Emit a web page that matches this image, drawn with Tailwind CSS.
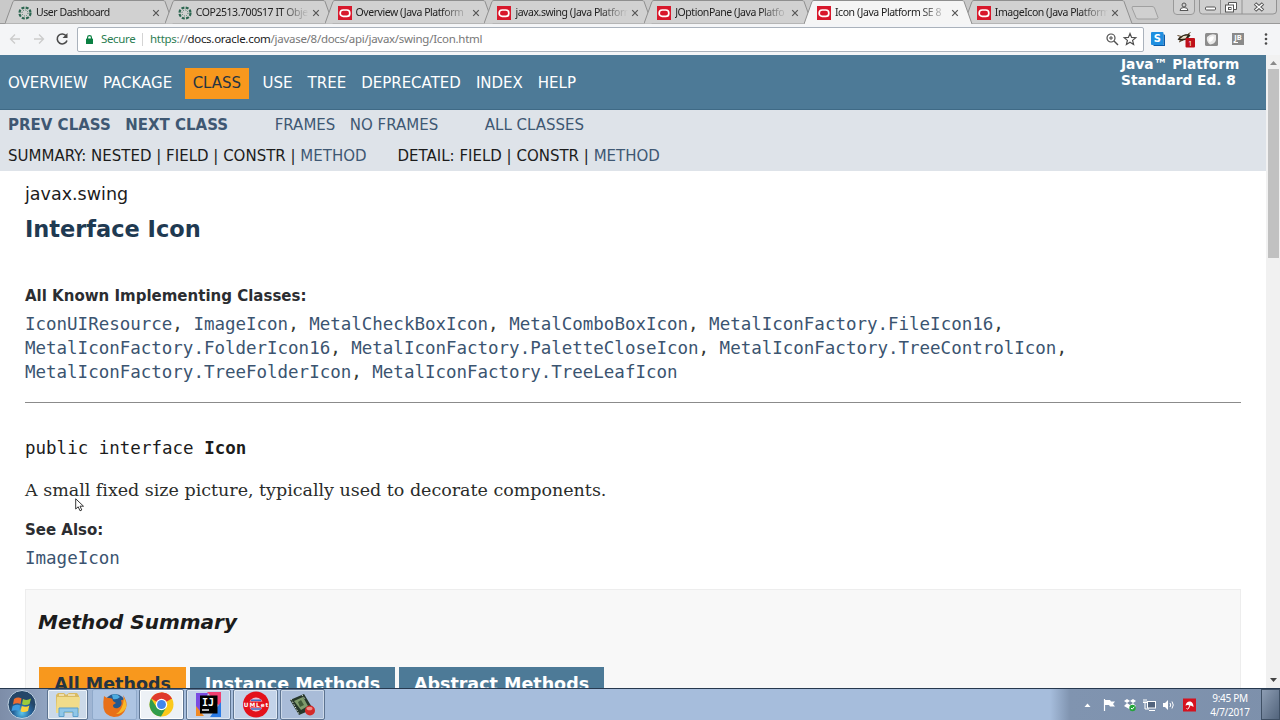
<!DOCTYPE html>
<html lang="en">
<head>
  <meta charset="UTF-8" />
  <meta name="viewport" content="width=device-width, initial-scale=1.0" />
  <title>Icon (Java Platform SE 8 )</title>
  <script src="https://cdn.jsdelivr.net/npm/@tailwindcss/browser@4"></script>
</head>
<body class="w-[1280px] h-[720px] overflow-hidden bg-white flex flex-col font-['DejaVu_Sans',sans-serif] text-[#1c1c1c]">
  <!-- shared icons -->
  <svg class="hidden">
    <symbol id="canvas" viewBox="0 0 14 14">
      <circle cx="7" cy="7" r="5.500" fill="none" stroke="#2c6650" stroke-width="2.200" stroke-dasharray="3 1.320" />
      <circle cx="7" cy="7" r="3" fill="none" stroke="#2c6650" stroke-width=".9" stroke-dasharray="1 1.360" />
    </symbol>
    <symbol id="oracle" viewBox="0 0 14 14">
      <rect width="14" height="14" fill="#d8182c" />
      <rect x="2.200" y="4" width="9.600" height="6.400" rx="3" fill="none" stroke="#fff" stroke-width="1.700" />
    </symbol>
    <symbol id="close" viewBox="0 0 8 8">
      <path d="M1.200 1.200l5.600 5.600M6.800 1.200L1.200 6.800" stroke="#555" stroke-width="1.200" />
    </symbol>
    <symbol id="tab" viewBox="0 0 170 24">
      <path d="M0 23.500L8 1.500Q8.600 .5 10 .5H158Q159.500 .5 160 1.500L168 23.500" fill="#d1d1d1" stroke="#8f8f8f" />
    </symbol>
    <symbol id="tab-on" viewBox="0 0 170 24">
      <path d="M0 24L8 1.500Q8.600 .5 10 .5H158Q159.500 .5 160 1.500L168 24" fill="#f5f5f5" stroke="#8f8f8f" />
    </symbol>
  </svg>

  <header class="h-[55px] shrink-0 font-['Noto_Sans',sans-serif]">
    <!-- tab strip -->
    <div class="h-6 flex justify-between bg-[#c9c9c9] border-b border-[#999]">
      <div id="tabs" class="flex pl-[5px] text-[10.5px] tracking-[-0.45px] text-[#222]"></div>
      <div class="flex items-start pr-[3px]">
        <svg class="w-7 h-6 mr-[14px]" viewBox="0 0 28 24"><path d="M1.500 6.500H21Q23 6.500 23.500 8L27 17.500Q27 19 25 19H7Q5.500 19 5 17.500L1 8Z" fill="#d0d0d0" stroke="#a0a0a0" /></svg>
        <svg class="w-[22px] h-[15px] mr-[4px]" viewBox="0 0 22 15" fill="none"><path d="M.5 0V11Q.5 14.500 4 14.500H18Q21.500 14.500 21.500 11V0" fill="#cfcfcf" stroke="#999" /><circle cx="11" cy="5" r="2" stroke="#555" /><path d="M7 10.500Q7 7.500 11 7.500T15 10.500Z" fill="#fff" stroke="#555" /></svg>
        <svg class="w-[78px] h-[15px]" viewBox="0 0 78 15" fill="none"><path d="M.5 0V11Q.5 14 3.500 14H74Q77.500 14 77.500 11V0M21.500 0V14M43 0V14" fill="#cfcfcf" stroke="#929292" /><rect x="6.500" y="7" width="10" height="3" rx="1" fill="#fff" stroke="#555" /><path d="M29.500 2.500H37.500V9.500H29.500Z" fill="#fff" stroke="#555" /><rect x="26.500" y="5" width="8" height="7" fill="#fff" stroke="#555" /><rect x="29.500" y="7.500" width="2.500" height="2" stroke="#555" /><path d="M56 3.500l8 7M64 3.500l-8 7" stroke="#555" stroke-width="3.600" /><path d="M56.500 4l7 6M63.500 4l-7 6" stroke="#fff" stroke-width="1.600" /></svg>
      </div>
    </div>
    <!-- toolbar -->
    <div class="h-[31px] flex items-center bg-[#f4f5f7] pb-px">
      <svg class="w-[77px] h-[24px] shrink-0" viewBox="0 0 77 24" fill="none"><path d="M20 12H10.500M15 7.500L10.500 12L15 16.500M34 12H43.500M39 7.500L43.500 12L39 16.500" stroke="#ccc" stroke-width="1.300" /><path d="M66.300 9A5 5 0 1 0 67 13.500" stroke="#4a4a4a" stroke-width="1.600" /><path d="M67.500 6V11H62.500Z" fill="#4a4a4a" /></svg>
      <div class="w-[1067px] h-[25px] shrink-0 flex items-center rounded-[2px] border border-[#aab2bc] bg-white text-[11.5px] pl-[7px] whitespace-nowrap">
        <svg class="w-[9px] h-[11px] mr-[7px] shrink-0" viewBox="0 0 9 11"><rect x="1" y="4.500" width="7" height="5.500" rx=".6" fill="#0b8043" /><path d="M2.600 5V3.200Q2.600 1.600 4.500 1.600T6.400 3.200V5" fill="none" stroke="#0b8043" stroke-width="1.200" /></svg>
        <span class="w-[34px] text-[#2b7d52] tracking-[-0.35px]">Secure</span>
        <span class="w-px h-[13px] bg-[#d4d4d4] ml-[7px] mr-[7px]"></span>
        <span class="flex-1 text-[#777] tracking-[-0.28px]"><span class="text-[#2b7d52]">https</span>://<span class="text-[#1b1b1b]">docs.oracle.com</span>/javase/8/docs/api/javax/swing/Icon.html</span>
        <svg class="w-[34px] h-[14px] mr-[4px]" viewBox="0 0 34 14" fill="none" stroke="#4f4f4f"><circle cx="6" cy="6" r="4" stroke-width="1.200" /><path d="M9 9l4 4" stroke-width="1.500" /><path d="M4 6H8M6 4V8" stroke-width="1" /><path d="M25 1.500l1.600 3.900 4.200.3-3.200 2.700 1 4.100L25 10.300l-3.600 2.200 1-4.100-3.200-2.700 4.200-.3Z" stroke-width="1.200" /></svg>
      </div>
      <div class="flex items-center pl-[7px]">
        <svg class="w-[14px] h-[14px] mr-[11px]" viewBox="0 0 14 14"><rect width="12.500" height="13" rx="1" fill="#1f8fe0" /><path d="M12.500 2L14 3V14H3L2 13H12.500Z" fill="#0a5cab" /><text x="6.300" y="10" text-anchor="middle" font-size="10" font-weight="bold" fill="#fff" font-family="DejaVu Sans">S</text></svg>
        <svg class="w-[20px] h-[20px] mr-[9px]" viewBox="0 0 20 20"><path d="M1.500 10.500Q5 5 13 5L14.500 6.500L11 10.500L5 12Z" fill="#2c2415" /><path d="M4 10L7.500 7L11.500 6.500L9.500 9.500Z" fill="#eadfc8" /><path d="M1.500 6.500l4 1M3 13l4-2M14.500 3.500l-3 2" stroke="#5a3d20" fill="none" /><rect x="9.500" y="9" width="9.500" height="9.500" rx="1" fill="#bf1019" /><text x="14.200" y="16.500" text-anchor="middle" font-size="7" fill="#fff" font-family="Noto Sans">1</text></svg>
        <svg class="w-[13px] h-[13px] mr-[14px]" viewBox="0 0 13 13"><rect width="13" height="13" rx="1.500" fill="#8c8c8c" /><path d="M2 4Q6 0 11 2V7Q10 11 5 11.500Q1 9 2 4Z" fill="#e9e9e9" /><path d="M4 5Q7 2 9 4Q8 8 5 9Q3 8 4 5Z" fill="#fff" /></svg>
        <svg class="w-[12px] h-[12px] mr-[20px]" viewBox="0 0 12 12"><rect width="12" height="12" fill="#8a8a8a" /><text x="6" y="7" text-anchor="middle" font-size="7.500" font-weight="bold" fill="#fff" font-family="Noto Sans">JB</text><path d="M1.500 9.500H6" stroke="#fff" /></svg>
        <svg class="w-[4px] h-[14px]" viewBox="0 0 4 14" fill="#4a4a4a"><circle cx="2" cy="2.500" r="1.300" /><circle cx="2" cy="7" r="1.300" /><circle cx="2" cy="11.500" r="1.300" /></svg>
      </div>
    </div>
  </header>

  <div class="h-[633px] shrink-0 flex overflow-hidden">
    <main class="w-[1266px] shrink-0">
      <nav class="h-[55px] flex justify-between items-start bg-[#4d7a97] text-white text-[15px] border-b border-[#3f6a86]">
        <ul class="flex pt-[13px] pl-[0.5px] leading-[31px] [&>li]:px-[7.5px]">
          <li>OVERVIEW</li>
          <li>PACKAGE</li>
          <li class="ml-[5.5px] mr-[6.5px] bg-[#f8981d] text-[#253441]">CLASS</li>
          <li>USE</li>
          <li>TREE</li>
          <li>DEPRECATED</li>
          <li>INDEX</li>
          <li>HELP</li>
        </ul>
        <div class="w-[145px] pt-px text-[13.75px] leading-4 font-bold">Java™ Platform<br>Standard Ed. 8</div>
      </nav>
      <div class="h-[61px] bg-[#dee3e9] text-[15px] leading-[20px] pl-[8px] pt-[5px]">
        <div class="flex text-[#3f5873]">
          <a class="font-bold mr-[14.5px]">PREV CLASS</a>
          <a class="font-bold mr-[46.5px]">NEXT CLASS</a>
          <a class="mr-[14.5px]">FRAMES</a>
          <a class="mr-[46.5px]">NO FRAMES</a>
          <a>ALL CLASSES</a>
        </div>
        <div class="flex pt-[11px]">
          <div class="w-[389.5px]">SUMMARY: NESTED | FIELD | CONSTR | <a class="text-[#3f5873]">METHOD</a></div>
          <div>DETAIL: FIELD | CONSTR | <a class="text-[#3f5873]">METHOD</a></div>
        </div>
      </div>

      <div class="px-[25px] pt-[11px] text-[17.5px] leading-6">
        <div>javax.swing</div>
        <h2 class="mt-[9px] text-[22.5px] leading-7 font-bold tracking-[-0.03px] text-[#1f3a52]">Interface Icon</h2>
        <div class="mt-[43px] text-[15px] leading-5 font-bold text-[#2b2d31]">All Known Implementing Classes:</div>
        <div class="mt-[6px] font-['DejaVu_Sans_Mono',monospace] tracking-[-0.012px] text-[#3b5470] [&_i]:not-italic [&_i]:text-[#353833]">
          IconUIResource<i>,</i> ImageIcon<i>,</i> MetalCheckBoxIcon<i>,</i> MetalComboBoxIcon<i>,</i> MetalIconFactory.FileIcon16<i>,</i><br>
          MetalIconFactory.FolderIcon16<i>,</i> MetalIconFactory.PaletteCloseIcon<i>,</i> MetalIconFactory.TreeControlIcon<i>,</i><br>
          MetalIconFactory.TreeFolderIcon<i>,</i> MetalIconFactory.TreeLeafIcon
        </div>
        <div class="mt-[18px] h-px bg-[#8b8b8b]"></div>
        <div class="mt-[33px] font-['DejaVu_Sans_Mono',monospace]">public interface <b>Icon</b></div>
        <div class="mt-[18px] font-['DejaVu_Serif',serif] tracking-[-0.015px] text-[#2a2c2a]">A small fixed size picture, typically used to decorate components.</div>
        <div class="mt-[18px] text-[15px] leading-5 font-bold text-[#2b2d31]">See Also:</div>
        <div class="mt-[6px] font-['DejaVu_Sans_Mono',monospace] text-[#3b5470]">ImageIcon</div>

        <section class="mt-[19px] h-[120px] bg-[#f8f8f8] border border-[#ededed] pl-[13px] pt-[20px]">
          <h3 class="-ml-px text-[20px] font-bold italic">Method Summary</h3>
          <div class="flex gap-1 mt-[33px] font-bold text-white leading-[34px]">
            <span class="w-[147px] text-center bg-[#f8981d] text-[#253441]">All Methods</span>
            <span class="w-[205px] text-center bg-[#4d7a97]">Instance Methods</span>
            <span class="w-[205px] text-center bg-[#4d7a97]">Abstract Methods</span>
          </div>
        </section>
      </div>
    </main>
    <!-- scrollbar -->
    <div class="w-[14px] bg-[#f1f1f1] flex flex-col items-center justify-between py-[6px]">
      <svg class="w-[7px] h-[4px]" viewBox="0 0 7 4"><path d="M0 4L3.500 0L7 4Z" fill="#8a8a8a" /></svg>
      <div class="w-[11px] h-[189px] mt-[4px] mb-auto bg-[#c1c1c1]"></div>
      <svg class="w-[7px] h-[4px]" viewBox="0 0 7 4"><path d="M0 0L3.500 4L7 0Z" fill="#444" /></svg>
    </div>
  </div>

  <!-- taskbar -->
  <footer class="h-8 shrink-0 flex justify-between border-t border-[#26384e] bg-[linear-gradient(90deg,#7d8da8_0,#8fa2bf_44px,#a6bddc_110px,#a6bddc_1050px,#8094b0_1070px,#7d90ab_1280px)] font-['Noto_Sans',sans-serif]">
    <div class="flex items-center">
      <svg class="w-[44px] h-[31px] mr-[3px]" viewBox="0 0 44 31">
        <defs><radialGradient id="orb" cy=".8"><stop offset="0" stop-color="#5cc8ee" /><stop offset=".6" stop-color="#26649c" /><stop offset="1" stop-color="#244668" /></radialGradient></defs>
        <circle cx="22" cy="15.500" r="14" fill="url(#orb)" stroke="#c1d3e3" />
        <path d="M14 10Q18 7.500 21.500 9.500L20.500 15Q17 13.500 13 15.500Z" fill="#ee6c2f" />
        <path d="M23 10Q27 12 31 9.500L29.500 15Q26 17 22 15.200Z" fill="#9bcb3c" />
        <path d="M12.700 17Q17 15 20.200 16.500L19 22Q16 20.500 11.500 22Z" fill="#3d9be0" />
        <path d="M21.800 17Q26 18.700 29.300 16.500L28 22Q24 24 20.500 22.200Z" fill="#fcd03c" />
      </svg>
      <div class="flex gap-[2px] h-[31px] [&>div]:w-[45px] [&>div]:flex [&>div]:items-center [&>div]:justify-center [&>div]:border [&>div]:border-[#5c7390] [&>div]:rounded-[2px]">
        <div class="bg-[#cbd9e9] w-[41px]! shadow-[inset_0_0_0_1px_#edf3f9]">
          <svg class="w-[28px] h-[27px]" viewBox="0 0 28 27"><path d="M2 4L4 2H10L12 4L15 2H23L25 5V22H2Z" fill="#d9bb62" /><path d="M3 6H26L25 22H2Z" fill="#f1dc8a" /><path d="M5 4H10M14 4H21" stroke="#fff" /><path d="M5 25.500V17H24V25.500H19V21H10V25.500Z" fill="#8fc7e8" stroke="#5c9fcc" /></svg>
        </div>
        <div class="bg-[#adc4e2] ml-[2px] border-[#8fa9ca]!">
          <svg class="w-[26px] h-[26px]" viewBox="0 0 26 26"><circle cx="13" cy="12.500" r="10.500" fill="#24588f" /><path d="M10 3Q15 1 18 5Q15 8 11 7Z" fill="#4cabdf" /><path d="M2 4Q4 6 7 6Q11 6 11 9L14 11L11 13Q11 17 16 16Q21 14 19 8Q23 9 21 3Q26 10 24 16Q21 25 12 25Q3 24 1.500 16Q1 9 2 4Z" fill="#e8701a" /><path d="M22 6Q25 11 24 16Q20 22 14 22Q21 18 22 6Z" fill="#f9b928" /></svg>
        </div>
        <div class="bg-[#edf1f6] shadow-[inset_0_0_0_1px_#fff]">
          <svg class="w-[25px] h-[25px]" viewBox="0 0 24 24"><circle cx="12" cy="12" r="11.500" fill="#fbc91c" /><path d="M12 12L2 6.300A11.500 11.500 0 0 1 22 6.300Z" fill="#df3a2d" /><path d="M2 6.300A11.500 11.500 0 0 0 11.500 23.500L16.700 14.700L7.300 14.700Z" fill="#2f9c4b" /><path d="M12 6.500H22A11.500 11.500 0 0 0 12 .5Z" fill="#df3a2d" /><circle cx="12" cy="12" r="5.500" fill="#fff" /><circle cx="12" cy="12" r="4.300" fill="#4286ee" /></svg>
        </div>
        <div class="bg-[#c3d3e9] shadow-[inset_0_0_0_1px_#dfe8f3]">
          <svg class="w-[25px] h-[25px]" viewBox="0 0 25 25"><path d="M0 1H12L5 24H0Z" fill="#7a4ce2" /><path d="M0 14L8 24H0Z" fill="#f08a24" /><path d="M11 0H25V16Z" fill="#f23f70" /><path d="M14 25L25 10V25Z" fill="#2b7be6" /><rect x="4" y="3.500" width="17.500" height="18" fill="#000" /><text x="6" y="14" font-size="10" font-weight="bold" fill="#fff" font-family="DejaVu Sans Mono">IJ</text><path d="M6 18H13" stroke="#fff" stroke-width="1.400" /></svg>
        </div>
        <div class="bg-[#c3d3e9] shadow-[inset_0_0_0_1px_#dfe8f3]">
          <svg class="w-[28px] h-[27px]" viewBox="0 0 28 27"><circle cx="14" cy="13.500" r="13" fill="#e4111b" /><circle cx="14" cy="13.500" r="7" fill="#e9c3d2" /><path d="M9 9.300H19M9 18H19" stroke="#3f6cc4" stroke-width="1.600" /><rect x="2" y="10.500" width="24" height="6" fill="#e4111b" /><text x="14.500" y="15.700" text-anchor="middle" font-size="5.800" font-weight="bold" letter-spacing=".9" fill="#fff" font-family="DejaVu Sans">UMLet</text></svg>
        </div>
        <div class="bg-[#a9bcd8] shadow-[inset_0_0_0_1px_#ccd9e9]">
          <svg class="w-[27px] h-[25px]" viewBox="0 0 27 25"><path d="M1 8L15 2L24 17L10 23Z" fill="#26372a" /><path d="M5 9L14 5L19 14L12 18Z" fill="#7f9b6c" /><path d="M2 7l8 15M13 3l3 4" stroke="#d9ddd6" stroke-dasharray="1.500 1.500" /><path d="M9 10l3-2 3 5-4 2Z" fill="#405b38" /><circle cx="21" cy="18.500" r="5" fill="#d42a2a" /><ellipse cx="20.500" cy="16.500" rx="3" ry="1.800" fill="#ef8d8a" /></svg>
        </div>
      </div>
    </div>
    <div class="flex items-center text-white text-[10px] tracking-[-0.3px]">
      <svg class="w-[114px] h-[16px] mr-[14px]" viewBox="1083 0 114 16" fill="none">
        <path d="M1084.500 10L1087.500 6.500L1090.500 10Z" fill="#fff" />
        <path d="M1104.500 2V14" stroke="#fff" stroke-width="1.200" /><path d="M1105 3H1110L1111 4.500H1115L1113 7L1115 9.500H1110L1109 8H1105Z" fill="#fff" />
        <path d="M1124 4L1127 2L1130 4L1133 2L1136 4L1133 6L1136 9L1131 13L1124 9L1127 6Z" fill="#fff" /><path d="M1127 6L1130 4L1133 6L1130 8Z" fill="#74859f" /><circle cx="1132.500" cy="11" r="3.200" fill="#25a53b" /><path d="M1131 11l1.200 1.200 2-2.400" stroke="#fff" />
        <rect x="1147.500" y="4.500" width="8" height="6.500" fill="#53647d" stroke="#fff" /><path d="M1149 13.500H1155M1144 2V5M1146 2V5M1143 5.500H1147M1145 6V12H1149" stroke="#fff" />
        <path d="M1163 6H1165L1168 3V13L1165 10H1163Z" fill="#fff" /><path d="M1170 6Q1171.500 8 1170 10M1172 4.500Q1174.500 8 1172 11.500" stroke="#fff" />
        <rect x="1183" y="1.500" width="13" height="13" fill="#d5121e" /><path d="M1185.500 8.500Q1186.500 4 1190.500 4.500Q1193.500 5.500 1193.500 10Q1191.500 8 1189.800 8.500Q1187.500 7.500 1185.500 8.500Z" fill="#fff" /><path d="M1190 8L1188.500 11.500Q1187.500 12.500 1186.500 11.500" stroke="#fff" />
      </svg>
      <div class="w-[38px] text-center leading-[14px] pt-px whitespace-nowrap flex flex-col items-center"><span>9:45 PM</span><span>4/7/2017</span></div>
      <div class="w-[19px] h-[31px] ml-[12px] border border-[#3f5065] bg-linear-to-br from-[#8d9db3] to-[#53657d]"></div>
    </div>
  </footer>

  <!-- mouse pointer -->
  <svg class="absolute left-[75px] top-[498px] w-[10px] h-[14px]" viewBox="0 0 10 14"><path d="M.7 .8V11L3.200 8.800L5 12.800L6.800 12L5 8.200H8.500Z" fill="#fff" stroke="#222" stroke-width=".9" /></svg>

  <script>
    const tabs = [
      { title: 'User Dashboard', icon: 'canvas' },
      { title: 'COP2513.700S17 IT Obje', icon: 'canvas' },
      { title: 'Overview (Java Platform', icon: 'oracle' },
      { title: 'javax.swing (Java Platform', icon: 'oracle' },
      { title: 'JOptionPane (Java Platfo', icon: 'oracle' },
      { title: 'Icon (Java Platform SE 8', icon: 'oracle', active: true },
      { title: 'ImageIcon (Java Platform', icon: 'oracle' }
    ];

    document.getElementById('tabs').innerHTML = tabs.map(t => `
      <div class="relative w-[159.8px] h-6 shrink-0 ${t.active ? 'z-10' : ''}">
        <svg class="absolute left-0 top-0 w-[170px] h-6"><use href="#${t.active ? 'tab-on' : 'tab'}" /></svg>
        <div class="relative flex items-center h-6 pl-[13px] pt-px">
          <svg class="w-[14px] h-[14px] shrink-0"><use href="#${t.icon}" /></svg>
          <span class="w-[113px] ml-[4px] mr-[3px] whitespace-nowrap mask-r-from-75% mask-r-to-100%">${t.title}</span>
          <svg class="w-[8px] h-[8px] shrink-0"><use href="#close" /></svg>
        </div>
      </div>`).join('');
  </script>
</body>
</html>
